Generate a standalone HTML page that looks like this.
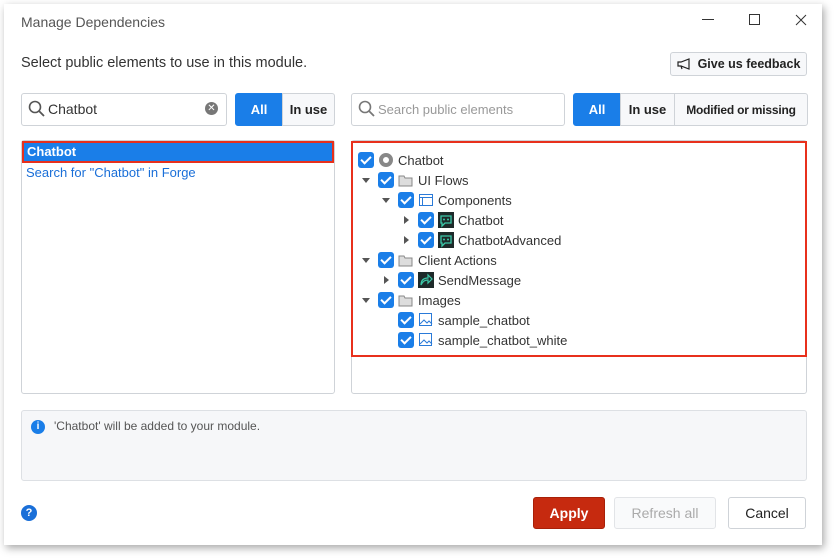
<!DOCTYPE html><html><head><style>
*{box-sizing:border-box;margin:0;padding:0}
body{width:837px;height:560px;background:#fff;font-family:"Liberation Sans",sans-serif;position:relative;overflow:hidden;color:#333}
.dlg{position:absolute;left:4px;top:4px;width:818px;height:541px;background:#fff;box-shadow:2px 3px 8px rgba(0,0,0,.35)}
.a{position:absolute}
.btn{position:absolute;border:1px solid #cfd3d8;border-radius:3px;background:#f7f8fa;font-size:13px;display:flex;align-items:center;justify-content:center;color:#222;white-space:nowrap}
.cb{position:absolute;width:16px;height:16px;background:#1a7ee8;border-radius:3px}
.cb:after{content:"";position:absolute;left:5px;top:2px;width:4px;height:8px;border:solid #fff;border-width:0 2px 2px 0;transform:rotate(45deg)}
.row{position:absolute;font-size:13px;color:#333;height:20px;line-height:20px}
.tri{position:absolute;width:0;height:0}
.td{border-left:4px solid transparent;border-right:4px solid transparent;border-top:5px solid #555}
.tr{border-top:4px solid transparent;border-bottom:4px solid transparent;border-left:5px solid #555}
</style></head><body>
<div class="dlg"></div>
<div class="a" style="left:21px;top:14px;font-size:14px;color:#555">Manage Dependencies</div>
<div class="a" style="left:702px;top:19px;width:12px;height:1px;background:#333"></div>
<div class="a" style="left:749px;top:14px;width:11px;height:11px;border:1px solid #333"></div>
<svg class="a" style="left:795px;top:14px" width="12" height="12"><path d="M1 1l10 10M11 1L1 11" stroke="#333" stroke-width="1"/></svg>
<div class="a" style="left:21px;top:55px;font-size:14.5px;color:#333">Select public elements to use in this module.</div>
<div class="btn" style="left:670px;top:52px;width:137px;height:24px;font-size:12.5px;font-weight:bold"><svg width="16" height="12" viewBox="0 0 16 12" style="margin-right:5px"><path d="M1 4h3l8-3v10l-8-3H1z M4 8l1 3" fill="none" stroke="#222" stroke-width="1.2"/></svg>Give us feedback</div>
<div class="a" style="left:21px;top:93px;width:206px;height:33px;border:1px solid #cfd3d8;border-radius:3px"></div>
<svg class="a" style="left:28px;top:100px" width="18" height="18"><circle cx="7" cy="7" r="5.5" fill="none" stroke="#555" stroke-width="1.6"/><path d="M11 11l5 5" stroke="#555" stroke-width="1.8"/></svg>
<div class="a" style="left:48px;top:101px;font-size:14px;color:#333">Chatbot</div>
<div class="a" style="left:205px;top:102px;width:13px;height:13px;border-radius:50%;background:#777;color:#fff;font-size:10px;line-height:13px;text-align:center">✕</div>
<div class="btn" style="left:235px;top:93px;width:48px;height:33px;background:#1a7ee8;border-color:#1a7ee8;color:#fff;font-weight:bold;border-radius:3px 0 0 3px">All</div>
<div class="btn" style="left:282px;top:93px;width:53px;height:33px;border-radius:0 3px 3px 0;font-weight:bold">In use</div>
<div class="a" style="left:21px;top:140px;width:314px;height:254px;border:1px solid #cfd3d8;border-radius:3px"></div>
<div class="a" style="left:22px;top:141px;width:312px;height:22px;background:#1a7ee8;border:2px solid #e8301c;color:#fff;font-weight:bold;font-size:13px;line-height:18px;padding-left:3px">Chatbot</div>
<div class="a" style="left:26px;top:165px;font-size:13px;color:#1a6fd8">Search for "Chatbot" in Forge</div>
<div class="a" style="left:351px;top:93px;width:214px;height:33px;border:1px solid #cfd3d8;border-radius:3px"></div>
<svg class="a" style="left:358px;top:100px" width="18" height="18"><circle cx="7" cy="7" r="5.5" fill="none" stroke="#777" stroke-width="1.6"/><path d="M11 11l5 5" stroke="#777" stroke-width="1.8"/></svg>
<div class="a" style="left:378px;top:102px;font-size:13px;color:#999">Search public elements</div>
<div class="btn" style="left:573px;top:93px;width:48px;height:33px;background:#1a7ee8;border-color:#1a7ee8;color:#fff;font-weight:bold;border-radius:3px 0 0 3px">All</div>
<div class="btn" style="left:620px;top:93px;width:55px;height:33px;border-radius:0;font-weight:bold">In use</div>
<div class="btn" style="left:674px;top:93px;width:134px;height:33px;border-radius:0 3px 3px 0;font-weight:bold;font-size:12px;letter-spacing:-0.2px">Modified or missing</div>
<div class="a" style="left:351px;top:140px;width:456px;height:254px;border:1px solid #cfd3d8;border-radius:3px"></div>
<div class="a" style="left:351px;top:141px;width:456px;height:216px;border:2px solid #e8301c"></div>
<div class="cb" style="left:358px;top:152px"></div><div class="a" style="left:379px;top:153px;width:14px;height:14px;border-radius:50%;border:4px solid #888"></div><div class="row" style="left:398px;top:151px">Chatbot</div>
<div class="tri td" style="left:362px;top:178px"></div><div class="cb" style="left:378px;top:172px"></div><svg class="a" style="left:398px;top:174px" width="16" height="13"><path d="M1 2h5l1 2h7v8H1z" fill="#ddd" stroke="#888"/></svg><div class="row" style="left:418px;top:171px">UI Flows</div>
<div class="tri td" style="left:382px;top:198px"></div><div class="cb" style="left:398px;top:192px"></div><svg class="a" style="left:418px;top:193px" width="16" height="14"><rect x="1.5" y="1.5" width="13" height="11" fill="none" stroke="#2a7ad8"/><path d="M1.5 4.5h13M4.5 4.5v8" stroke="#2a7ad8"/></svg><div class="row" style="left:438px;top:191px">Components</div>
<div class="tri tr" style="left:404px;top:216px"></div><div class="cb" style="left:418px;top:212px"></div><svg class="a" style="left:438px;top:212px" width="16" height="16"><rect width="16" height="16" fill="#1e2a2a"/><path d="M3 4h10v7H7l-3 3v-3H3z" fill="none" stroke="#3cc8a8" stroke-width="1.3"/><circle cx="6" cy="7.5" r="1" fill="#3cc8a8"/><circle cx="10" cy="7.5" r="1" fill="#3cc8a8"/></svg><div class="row" style="left:458px;top:211px">Chatbot</div>
<div class="tri tr" style="left:404px;top:236px"></div><div class="cb" style="left:418px;top:232px"></div><svg class="a" style="left:438px;top:232px" width="16" height="16"><rect width="16" height="16" fill="#1e2a2a"/><path d="M3 4h10v7H7l-3 3v-3H3z" fill="none" stroke="#3cc8a8" stroke-width="1.3"/><circle cx="6" cy="7.5" r="1" fill="#3cc8a8"/><circle cx="10" cy="7.5" r="1" fill="#3cc8a8"/></svg><div class="row" style="left:458px;top:231px">ChatbotAdvanced</div>
<div class="tri td" style="left:362px;top:258px"></div><div class="cb" style="left:378px;top:252px"></div><svg class="a" style="left:398px;top:254px" width="16" height="13"><path d="M1 2h5l1 2h7v8H1z" fill="#ddd" stroke="#888"/></svg><div class="row" style="left:418px;top:251px">Client Actions</div>
<div class="tri tr" style="left:384px;top:276px"></div><div class="cb" style="left:398px;top:272px"></div><svg class="a" style="left:418px;top:272px" width="16" height="16"><rect width="16" height="16" fill="#1e2a2a"/><path d="M3 13c0-5 3-7 7-7V3l4 4-4 4V8c-3 0-5 1-7 5z" fill="none" stroke="#3cc8a8" stroke-width="1.2"/></svg><div class="row" style="left:438px;top:271px">SendMessage</div>
<div class="tri td" style="left:362px;top:298px"></div><div class="cb" style="left:378px;top:292px"></div><svg class="a" style="left:398px;top:294px" width="16" height="13"><path d="M1 2h5l1 2h7v8H1z" fill="#ddd" stroke="#888"/></svg><div class="row" style="left:418px;top:291px">Images</div>
<div class="cb" style="left:398px;top:312px"></div><svg class="a" style="left:419px;top:313px" width="14" height="14"><rect x=".5" y=".5" width="12" height="12" fill="none" stroke="#2a7ad8"/><path d="M1 11l4-4 3 3 2-2 3 3" fill="none" stroke="#2a7ad8"/></svg><div class="row" style="left:438px;top:311px">sample_chatbot</div>
<div class="cb" style="left:398px;top:332px"></div><svg class="a" style="left:419px;top:333px" width="14" height="14"><rect x=".5" y=".5" width="12" height="12" fill="none" stroke="#2a7ad8"/><path d="M1 11l4-4 3 3 2-2 3 3" fill="none" stroke="#2a7ad8"/></svg><div class="row" style="left:438px;top:331px">sample_chatbot_white</div>
<div class="a" style="left:21px;top:410px;width:786px;height:71px;background:#f6f7f9;border:1px solid #dde0e4;border-radius:3px"></div>
<div class="a" style="left:31px;top:420px;width:14px;height:14px;border-radius:50%;background:#1a7ee8;color:#fff;font-size:10px;font-weight:bold;text-align:center;line-height:14px">i</div>
<div class="a" style="left:54px;top:419px;font-size:12px;color:#555">'Chatbot' will be added to your module.</div>
<div class="a" style="left:21px;top:505px;width:16px;height:16px;border-radius:50%;background:#1a6fd8;color:#fff;font-size:11px;font-weight:bold;text-align:center;line-height:16px">?</div>
<div class="btn" style="left:533px;top:497px;width:72px;height:32px;background:#c62a0f;border-color:#a82008;color:#fff;font-weight:bold;font-size:14px">Apply</div>
<div class="btn" style="left:614px;top:497px;width:102px;height:32px;color:#aaa;font-size:14px;background:#f9fafb;border-color:#e2e4e7">Refresh all</div>
<div class="btn" style="left:728px;top:497px;width:78px;height:32px;font-size:14px;background:#fff">Cancel</div>
</body></html>
